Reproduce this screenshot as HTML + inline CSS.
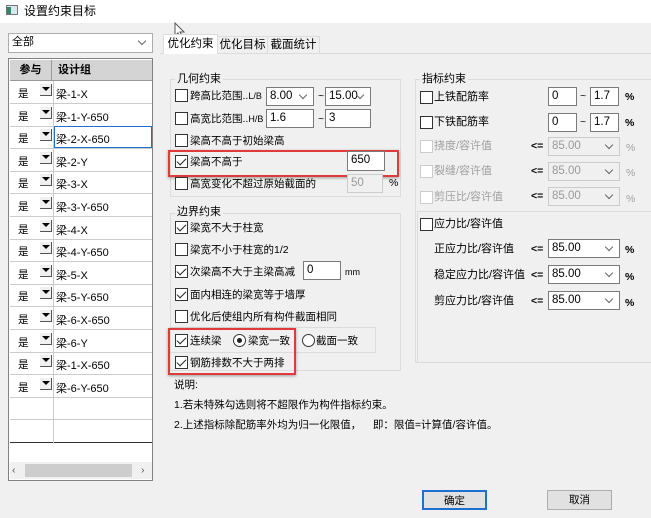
<!DOCTYPE html>
<html><head><meta charset="utf-8"><style>
*{box-sizing:border-box;margin:0;padding:0}
body{width:651px;height:518px;background:#f0f0f0;position:relative;overflow:hidden;font-family:"Liberation Sans","Noto Sans CJK SC",sans-serif;font-size:10.5px;color:#000}
.a{position:absolute;white-space:nowrap;line-height:14px}
.cb{position:absolute;width:13px;height:13px;border:1px solid #333;background:#fff}
.cb.d{border-color:#ccc}
.ck::after{content:"";position:absolute;left:3px;top:0px;width:4px;height:8px;border:solid #222;border-width:0 1.5px 1.5px 0;transform:rotate(45deg)}
.in{position:absolute;background:#fff;border:1px solid #7a7a7a;padding-left:3px;line-height:17px;font-size:11.5px}
.dis{background:#f0f0f0;border-color:#ccc;color:#999}
.dd::after{content:"";position:absolute;right:7px;top:4px;width:5px;height:5px;border:solid #666;border-width:0 1px 1px 0;transform:rotate(45deg)}
.grp{position:absolute;border:1px solid #dcdcdc}
.gt{position:absolute;background:#f0f0f0;padding:0 2px;line-height:14px;font-size:11px}
.red{position:absolute;border:2px solid #e03a3a;box-shadow:0 1px 3px rgba(0,0,0,.35)}
.g{color:#a0a0a0}
.row{position:absolute;left:10px;width:142px;height:23px;border-bottom:1px solid #ccc}
.row .c1{position:absolute;left:8px;top:5px}
.row .bt{position:absolute;left:30px;top:3px;width:12px;height:12px;background:#f0f0f0;border-right:1px solid #555;border-bottom:1px solid #555}
.row .bt::after{content:"";position:absolute;left:2px;top:3px;border:4px solid transparent;border-top:4px solid #000;border-bottom:0}
.row .sep{position:absolute;left:43px;top:0;width:1px;height:23px;background:#ccc}
.row .c2{position:absolute;left:46px;top:5px;font-size:11px}
.btn{position:absolute;background:#e1e1e1;border:1px solid #adadad;text-align:center;line-height:18px}
</style></head><body>
<div class="a" style="left:0;top:0;width:651px;height:23px;background:#fff"></div>
<div class="a" style="left:6px;top:5px;width:12px;height:10px;border:1px solid #777;background:#d8e8f0"></div>
<div class="a" style="left:7px;top:7px;width:4px;height:7px;background:#2a8a6a"></div>
<div class="a" style="left:24px;top:4px;font-size:12px">设置约束目标</div>
<svg class="a" style="left:174px;top:22px" width="12" height="18"><path d="M1 1 L1 14 L4 11 L7 17 L9 16 L6 10 L10 10 Z" fill="#fff" stroke="#555"/></svg>

<div class="in dd" style="left:8px;top:33px;width:145px;height:20px;border-color:#adadad;background:#fff;font-size:11px">全部</div>

<div class="a" style="left:8px;top:58px;width:145px;height:423px;border:1px solid #828282;background:#fff"></div>
<div class="a" style="left:10px;top:60px;width:142px;height:21px;background:#d4d4d4;border-bottom:1px solid #999"></div>
<div class="a" style="left:10px;top:60px;width:42px;height:21px;border-right:1px solid #999;font-weight:bold;text-align:center;line-height:20px;font-size:11px">参与</div>
<div class="a" style="left:58px;top:63px;font-weight:bold;font-size:11px">设计组</div>
<div class="row" style="top:81px"><span class="c1">是</span><span class="bt"></span><span class="sep"></span><span class="c2">梁-1-X</span></div>
<div class="row" style="top:104px"><span class="c1">是</span><span class="bt"></span><span class="sep"></span><span class="c2">梁-1-Y-650</span></div>
<div class="row" style="top:126px"><span class="c1">是</span><span class="bt"></span><span class="sep"></span><span class="c2" style="left:44px;top:0;width:98px;height:22px;border:1px solid #1e6fd0;padding:4px 0 0 1px">梁-2-X-650</span></div>
<div class="row" style="top:149px"><span class="c1">是</span><span class="bt"></span><span class="sep"></span><span class="c2">梁-2-Y</span></div>
<div class="row" style="top:171px"><span class="c1">是</span><span class="bt"></span><span class="sep"></span><span class="c2">梁-3-X</span></div>
<div class="row" style="top:194px"><span class="c1">是</span><span class="bt"></span><span class="sep"></span><span class="c2">梁-3-Y-650</span></div>
<div class="row" style="top:217px"><span class="c1">是</span><span class="bt"></span><span class="sep"></span><span class="c2">梁-4-X</span></div>
<div class="row" style="top:239px"><span class="c1">是</span><span class="bt"></span><span class="sep"></span><span class="c2">梁-4-Y-650</span></div>
<div class="row" style="top:262px"><span class="c1">是</span><span class="bt"></span><span class="sep"></span><span class="c2">梁-5-X</span></div>
<div class="row" style="top:284px"><span class="c1">是</span><span class="bt"></span><span class="sep"></span><span class="c2">梁-5-Y-650</span></div>
<div class="row" style="top:307px"><span class="c1">是</span><span class="bt"></span><span class="sep"></span><span class="c2">梁-6-X-650</span></div>
<div class="row" style="top:330px"><span class="c1">是</span><span class="bt"></span><span class="sep"></span><span class="c2">梁-6-Y</span></div>
<div class="row" style="top:352px"><span class="c1">是</span><span class="bt"></span><span class="sep"></span><span class="c2">梁-1-X-650</span></div>
<div class="row" style="top:375px"><span class="c1">是</span><span class="bt"></span><span class="sep"></span><span class="c2">梁-6-Y-650</span></div>
<div class="row" style="top:397px"><span class="sep"></span></div>
<div class="row" style="top:420px;border-bottom:1px solid #333"><span class="sep"></span></div>
<div class="a" style="left:10px;top:462px;width:142px;height:17px;background:#f0f0f0"></div>
<div class="a" style="left:25px;top:464px;width:107px;height:13px;background:#cdcdcd"></div>
<div class="a" style="left:12px;top:463px;color:#555">‹</div>
<div class="a" style="left:141px;top:463px;color:#555">›</div>

<!-- tabs -->
<div class="a" style="left:160px;top:53px;width:491px;height:1px;background:#dcdcdc"></div>
<div class="a" style="left:163px;top:34px;width:55px;height:20px;background:#fff;border:1px solid #dcdcdc;border-bottom:none;text-align:center;line-height:18px;font-size:11.5px">优化约束</div>
<div class="a" style="left:218px;top:36px;width:50px;height:18px;border:1px solid #dcdcdc;border-left:none;text-align:center;line-height:16px;font-size:11.5px">优化目标</div>
<div class="a" style="left:268px;top:36px;width:52px;height:18px;border:1px solid #dcdcdc;border-left:none;text-align:center;line-height:16px;font-size:11.5px">截面统计</div>

<!-- geometry -->
<div class="grp" style="left:170px;top:79px;width:231px;height:118px"></div>
<div class="gt" style="left:175px;top:72px">几何约束</div>
<div class="cb" style="left:175px;top:89px"></div><div class="a" style="left:190px;top:89px">跨高比范围..<span style="font-size:9px">L/B</span></div>
<div class="in dd" style="left:266px;top:87px;width:48px;height:19px">8.00</div><div class="a" style="left:318px;top:89px">~</div>
<div class="in dd" style="left:325px;top:87px;width:46px;height:19px">15.00</div>
<div class="cb" style="left:175px;top:112px"></div><div class="a" style="left:190px;top:112px">高宽比范围..<span style="font-size:9px">H/B</span></div>
<div class="in" style="left:266px;top:109px;width:48px;height:19px">1.6</div><div class="a" style="left:318px;top:112px">~</div>
<div class="in" style="left:325px;top:109px;width:46px;height:19px">3</div>
<div class="cb" style="left:175px;top:134px"></div><div class="a" style="left:190px;top:134px">梁高不高于初始梁高</div>
<div class="red" style="left:168px;top:150px;width:231px;height:27px"></div>
<div class="cb ck" style="left:175px;top:155px"></div><div class="a" style="left:190px;top:155px">梁高不高于</div>
<div class="in" style="left:347px;top:151px;width:38px;height:20px">650</div>
<div class="cb" style="left:175px;top:177px"></div><div class="a" style="left:190px;top:177px">高宽变化不超过原始截面的</div>
<div class="in dis" style="left:347px;top:174px;width:36px;height:19px">50</div><div class="a" style="left:389px;top:176px">%</div>

<!-- boundary -->
<div class="grp" style="left:170px;top:213px;width:231px;height:158px"></div>
<div class="gt" style="left:175px;top:205px">边界约束</div>
<div class="cb ck" style="left:175px;top:221px"></div><div class="a" style="left:190px;top:221px">梁宽不大于柱宽</div>
<div class="cb" style="left:175px;top:243px"></div><div class="a" style="left:190px;top:243px">梁宽不小于柱宽的1/2</div>
<div class="cb ck" style="left:175px;top:265px"></div><div class="a" style="left:190px;top:265px">次梁高不大于主梁高减</div>
<div class="in" style="left:303px;top:261px;width:38px;height:19px">0</div><div class="a" style="left:345px;top:265px;font-size:9px">mm</div>
<div class="cb ck" style="left:175px;top:288px"></div><div class="a" style="left:190px;top:288px">面内相连的梁宽等于墙厚</div>
<div class="cb" style="left:175px;top:310px"></div><div class="a" style="left:190px;top:310px">优化后使组内所有构件截面相同</div>
<div class="grp" style="left:170px;top:327px;width:206px;height:26px"></div>
<div class="red" style="left:168px;top:328px;width:128px;height:47px"></div>
<div class="cb ck" style="left:175px;top:334px"></div><div class="a" style="left:190px;top:334px">连续梁</div>
<div class="a" style="left:233px;top:334px;width:13px;height:13px;border:1px solid #333;border-radius:50%;background:#fff"></div><div class="a" style="left:237px;top:338px;width:5px;height:5px;border-radius:50%;background:#222"></div>
<div class="a" style="left:248px;top:334px">梁宽一致</div>
<div class="a" style="left:302px;top:334px;width:13px;height:13px;border:1px solid #333;border-radius:50%;background:#fff"></div>
<div class="a" style="left:316px;top:334px">截面一致</div>
<div class="cb ck" style="left:175px;top:356px"></div><div class="a" style="left:190px;top:356px">钢筋排数不大于两排</div>

<div class="a" style="left:174px;top:378px">说明:</div>
<div class="a" style="left:174px;top:398px">1.若未特殊勾选则将不超限作为构件指标约束。</div>
<div class="a" style="left:174px;top:418px">2.上述指标除配筋率外均为归一化限值，&nbsp;&nbsp;&nbsp;&nbsp;即：限值=计算值/容许值。</div>

<!-- index -->
<div class="grp" style="left:415px;top:79px;width:240px;height:284px"></div>
<div class="gt" style="left:420px;top:72px">指标约束</div>
<div class="cb" style="left:420px;top:91px"></div><div class="a" style="left:434px;top:90px;font-size:11px">上铁配筋率</div>
<div class="in" style="left:548px;top:87px;width:29px;height:19px">0</div><div class="a" style="left:580px;top:89px">~</div>
<div class="in" style="left:590px;top:87px;width:29px;height:19px">1.7</div><div class="a" style="left:625px;top:90px;font-weight:bold">%</div>
<div class="cb" style="left:420px;top:116px"></div><div class="a" style="left:434px;top:115px;font-size:11px">下铁配筋率</div>
<div class="in" style="left:548px;top:113px;width:29px;height:19px">0</div><div class="a" style="left:580px;top:115px">~</div>
<div class="in" style="left:590px;top:113px;width:29px;height:19px">1.7</div><div class="a" style="left:625px;top:116px;font-weight:bold">%</div>
<div class="cb d" style="left:420px;top:140px"></div><div class="a g" style="left:434px;top:139px;font-size:11px">挠度/容许值</div><div class="a" style="left:531px;top:139px;font-weight:bold">&lt;=</div>
<div class="in dd dis" style="left:548px;top:137px;width:72px;height:19px">85.00</div><div class="a g" style="left:626px;top:141px">%</div>
<div class="cb d" style="left:420px;top:165px"></div><div class="a g" style="left:434px;top:164px;font-size:11px">裂缝/容许值</div><div class="a" style="left:531px;top:164px;font-weight:bold">&lt;=</div>
<div class="in dd dis" style="left:548px;top:162px;width:72px;height:19px">85.00</div><div class="a g" style="left:626px;top:166px">%</div>
<div class="cb d" style="left:420px;top:191px"></div><div class="a g" style="left:434px;top:190px;font-size:11px">剪压比/容许值</div><div class="a" style="left:531px;top:189px;font-weight:bold">&lt;=</div>
<div class="in dd dis" style="left:548px;top:187px;width:72px;height:19px">85.00</div><div class="a g" style="left:626px;top:192px">%</div>
<div class="grp" style="left:417px;top:211px;width:240px;height:152px"></div>
<div class="cb" style="left:420px;top:218px"></div><div class="a" style="left:434px;top:217px;font-size:11px">应力比/容许值</div>
<div class="a" style="left:434px;top:242px;font-size:11px">正应力比/容许值</div><div class="a" style="left:531px;top:242px;font-weight:bold">&lt;=</div>
<div class="in dd" style="left:548px;top:239px;width:72px;height:19px">85.00</div><div class="a" style="left:625px;top:243px;font-weight:bold">%</div>
<div class="a" style="left:434px;top:268px;font-size:11px">稳定应力比/容许值</div><div class="a" style="left:531px;top:268px;font-weight:bold">&lt;=</div>
<div class="in dd" style="left:548px;top:265px;width:72px;height:19px">85.00</div><div class="a" style="left:625px;top:270px;font-weight:bold">%</div>
<div class="a" style="left:434px;top:294px;font-size:11px">剪应力比/容许值</div><div class="a" style="left:531px;top:294px;font-weight:bold">&lt;=</div>
<div class="in dd" style="left:548px;top:291px;width:72px;height:19px">85.00</div><div class="a" style="left:625px;top:296px;font-weight:bold">%</div>

<div class="btn" style="left:422px;top:490px;width:65px;height:20px;border:2px solid #1e6fd0">确定</div>
<div class="btn" style="left:547px;top:490px;width:65px;height:20px">取消</div>
</body></html>
